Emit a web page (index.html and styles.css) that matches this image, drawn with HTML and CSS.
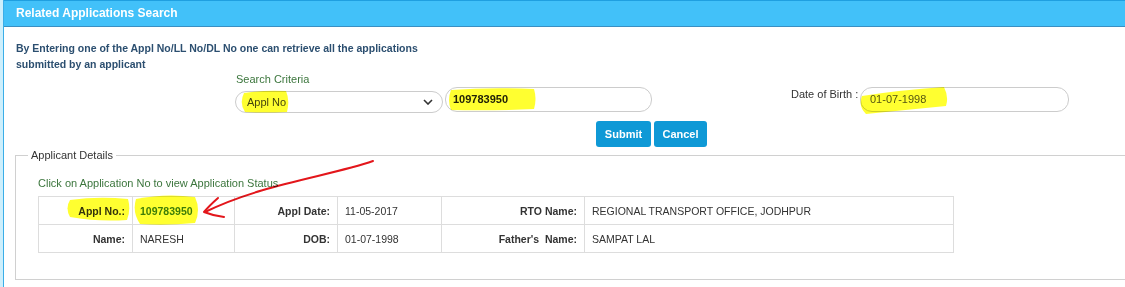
FILE: index.html
```html
<!DOCTYPE html>
<html>
<head>
<meta charset="utf-8">
<link rel="stylesheet" href="styles.css">
</head>
<body>
<div class="panel">
  <div class="panel-heading">Related Applications Search</div>
  <div class="panel-body">
    <p class="intro">By Entering one of the Appl No/LL No/DL No one can retrieve all the applications<br>submitted by an applicant</p>
    <div class="criteria">
      <div class="crit-col">
        <div class="crit-label">Search Criteria</div>
        <div class="select">
          <span class="select-text">Appl No</span>
          <svg class="chev" width="10" height="6" viewBox="0 0 10 6"><path d="M1 1 L5 5 L9 1" fill="none" stroke="#333" stroke-width="1.6"/></svg>
        </div>
      </div>
      <div class="input appl">109783950</div>
      <div class="dob-label">Date of Birth :</div>
      <div class="input dob">01-07-1998</div>
    </div>
    <div class="buttons">
      <button class="btn">Submit</button>
      <button class="btn">Cancel</button>
    </div>
    <fieldset class="details">
      <legend>Applicant Details</legend>
      <div class="hint">Click on Application No to view Application Status</div>
      <table class="info">
        <tr>
          <td class="lbl w1">Appl No.:</td>
          <td class="val w2"><a class="link">109783950</a></td>
          <td class="lbl w3">Appl Date:</td>
          <td class="val w4">11-05-2017</td>
          <td class="lbl w5">RTO Name:</td>
          <td class="val w6">REGIONAL TRANSPORT OFFICE, JODHPUR</td>
        </tr>
        <tr>
          <td class="lbl">Name:</td>
          <td class="val">NARESH</td>
          <td class="lbl">DOB:</td>
          <td class="val">01-07-1998</td>
          <td class="lbl">Father's&nbsp; Name:</td>
          <td class="val">SAMPAT LAL</td>
        </tr>
      </table>
    </fieldset>
  </div>
</div>
<svg class="marks" width="1125" height="287" viewBox="0 0 1125 287">
  <g fill="#ffff30">
    <path d="M244 93 Q262 90 286 91 Q290 100 287 112 Q262 113 245 112 Q239 103 244 93 Z"/>
    <path d="M451 90 Q490 87 534 89 Q537 99 534 109 Q490 111 451 110 Q447 100 451 90 Z"/>
    <path d="M862 96 Q900 90 944 87 Q949 97 946 106 Q905 110 866 114 Q858 106 862 96 Z"/>
    <path d="M70 200 Q98 196 128 199 Q131 210 127 220 Q98 222 70 217 Q65 208 70 200 Z"/>
    <path d="M136 199 Q165 193 195 197 Q201 210 195 223 Q165 226 140 224 Q132 212 136 199 Z"/>
  </g>
  <g fill="none" stroke="#e3161b" stroke-width="2" stroke-linecap="round" stroke-linejoin="round">
    <path d="M373 161 C330 176 262 184 205 212"/>
    <path d="M218 198 Q209 206 204 212 Q214 216 224 217"/>
  </g>
</svg>
</body>
</html>
```
FILE: styles.css
```css
body {
  margin: 0;
  font-family: "Liberation Sans", Arial, sans-serif;
  background: #fff;
  border-left: 3px solid #cdeffc;
  height: 287px;
  overflow: hidden;
  position: relative;
}
.panel {
  border-left: 1px solid #3aaee8;
  height: 287px;
}
.panel-heading {
  height: 25px;
  line-height: 25px;
  background: #42c1f9;
  border-top: 1px solid #1f9fe0;
  border-bottom: 1px solid #3a8fc2;
  color: #fff;
  font-weight: bold;
  font-size: 12px;
  padding-left: 12px;
}
.panel-body {
  padding-left: 11px;
}
.intro {
  margin: 14px 0 0 1px;
  font-size: 10.5px;
  font-weight: bold;
  line-height: 15.5px;
  color: #2c4f70;
}
.criteria {
  display: flex;
  align-items: flex-end;
  margin: -1px 0 0 220px;
  height: 41px;
}
.crit-col {
  display: flex;
  flex-direction: column;
  margin-bottom: -1px;
}
.crit-label {
  font-size: 11px;
  color: #3c763d;
  line-height: 14px;
  margin-left: 1px;
  margin-bottom: 5px;
}
.select {
  height: 20px;
  border: 1px solid #ccc;
  border-radius: 11px;
  display: flex;
  align-items: center;
  justify-content: space-between;
  padding: 0 9px 0 11px;
  box-sizing: content-box;
  font-size: 11px;
  color: #444;
  width: 186px;
}
.input {
  border: 1px solid #ccc;
  border-radius: 12px;
  box-sizing: border-box;
  height: 25px;
  line-height: 23px;
  font-size: 11px;
  color: #555;
  padding-left: 9px;
}
.input.appl {
  width: 207px;
  margin-left: 2px;
  color: #222;
  font-weight: bold;
  padding-left: 7px;
}
.dob-label {
  font-size: 11px;
  line-height: 13px;
  color: #333;
  margin-left: 139px;
  align-self: flex-start;
  margin-top: 17px;
  width: 67px;
  white-space: nowrap;
}
.input.dob {
  width: 209px;
  margin-left: 2px;
}
.buttons {
  display: flex;
  gap: 3px;
  margin: 9px 0 0 581px;
}
.btn {
  border: none;
  background: #0f99d6;
  color: #fff;
  font-family: "Liberation Sans", Arial, sans-serif;
  font-size: 11px;
  font-weight: bold;
  height: 26px;
  border-radius: 3px;
  padding: 0;
  width: 55px;
}
.btn + .btn {
  width: 53px;
}
.details {
  margin: 2px -40px 0 0;
  border: 1px solid #d0d0d0;
  padding: 0 0 26px 22px;
  height: 131px;
  box-sizing: border-box;
}
.details legend {
  font-size: 11px;
  color: #333;
  padding: 0 3px;
  margin-left: -10px;
  line-height: 13px;
}
.hint {
  font-size: 11px;
  color: #3c763d;
  margin-top: 14px;
  line-height: 14px;
}
.info {
  border-collapse: collapse;
  margin-top: 6px;
  font-size: 10.5px;
  color: #333;
}
.info td {
  border: 1px solid #ddd;
  height: 28px;
  padding: 0 7px;
  box-sizing: border-box;
}
.info .lbl {
  text-align: right;
  font-weight: bold;
}
.w1 { width: 94px; }
.w2 { width: 102px; }
.w3 { width: 103px; }
.w4 { width: 104px; }
.w5 { width: 143px; }
.w6 { width: 369px; }
.link {
  color: #3d7d1e;
  font-weight: bold;
}
.marks {
  position: absolute;
  left: -3px;
  top: 0;
  pointer-events: none;
  mix-blend-mode: multiply;
}
```
